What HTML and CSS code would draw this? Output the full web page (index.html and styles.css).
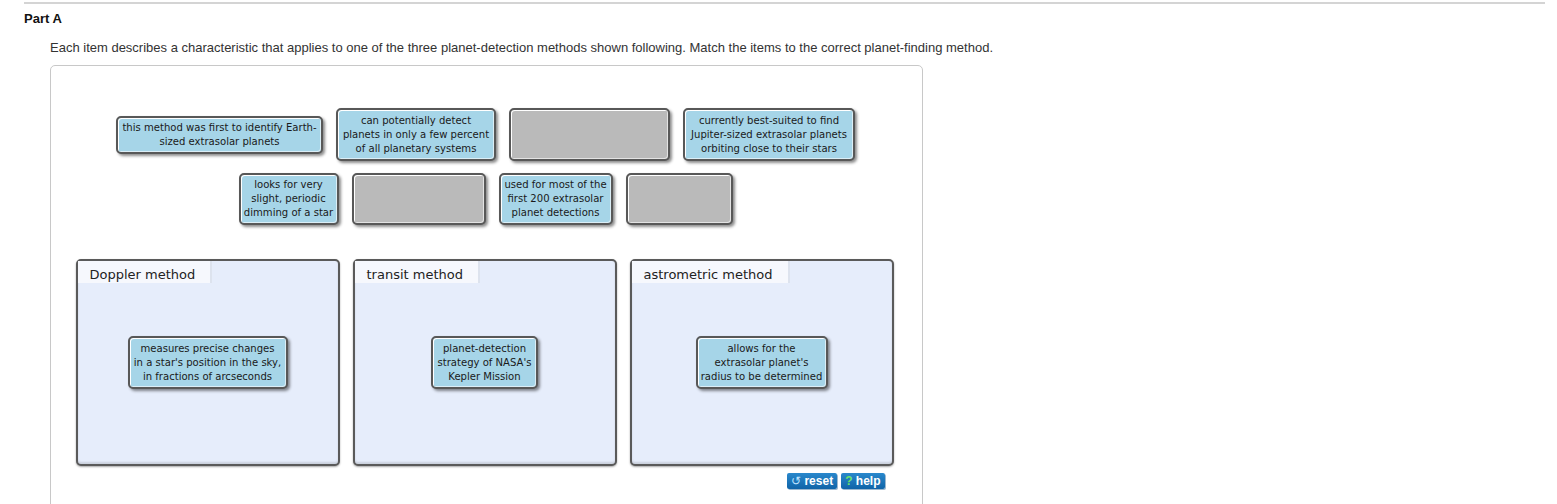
FILE: index.html
```html
<!DOCTYPE html>
<html lang="en">
<head>
    <meta charset="UTF-8">
    <title>Part A</title>
    <link rel="stylesheet" href="styles.css">
</head>
<body>
    <div class="page">
        <h3 class="part-title">Part A</h3>
        <p class="prompt">Each item describes a characteristic that applies to one of the three planet-detection methods shown following. Match the items to the correct planet-finding method.</p>

        <div class="answer-box">
            <!-- items still waiting to be sorted -->
            <div class="item-row">
                <div class="item" style="width: 207px; height: 38px;">this method was first to identify Earth-<br>sized extrasolar planets</div>
                <div class="item" style="width: 160px;">can potentially detect<br>planets in only a few percent<br>of all planetary systems</div>
                <div class="slot" style="width: 161px;"></div>
                <div class="item" style="width: 172px;">currently best-suited to find<br>Jupiter-sized extrasolar planets<br>orbiting close to their stars</div>
            </div>
            <div class="item-row row-two">
                <div class="item" style="width: 100px;">looks for very<br>slight, periodic<br>dimming of a star</div>
                <div class="slot" style="width: 134px;"></div>
                <div class="item" style="width: 114px;">used for most of the<br>first 200 extrasolar<br>planet detections</div>
                <div class="slot" style="width: 107px;"></div>
            </div>

            <!-- target bins -->
            <div class="bins">
                <div class="bin">
                    <div class="bin-label">Doppler method</div>
                    <div class="item" style="width: 160px;">measures precise changes<br>in a star's position in the sky,<br>in fractions of arcseconds</div>
                </div>
                <div class="bin">
                    <div class="bin-label">transit method</div>
                    <div class="item" style="width: 107px;">planet-detection<br>strategy of NASA's<br>Kepler Mission</div>
                </div>
                <div class="bin">
                    <div class="bin-label">astrometric method</div>
                    <div class="item" style="width: 132px;">allows for the<br>extrasolar planet's<br>radius to be determined</div>
                </div>
            </div>

            <div class="tools">
                <span class="tool-btn"><span class="reset-icon">&#8634;</span> reset</span>
                <span class="tool-btn"><span class="help-icon">?</span> help</span>
            </div>
        </div>
    </div>
</body>
</html>
```

FILE: styles.css
```css
body {
    margin: 0;
    font-family: "Liberation Sans", Arial, sans-serif;
    color: #333;
    background-color: #fff;
}

.page {
    margin: 2px 12px 0 24px;
    border-top: 2px solid #d4d4d4;
}

.part-title {
    margin: 0;
    padding-top: 7px;
    font-size: 13px;
    line-height: 15px;
    color: #111;
}

.prompt {
    margin: 14px 0 0 26px;
    font-size: 13px;
    line-height: 15px;
    color: #333;
}

.answer-box {
    margin: 10px 0 0 26px;
    width: 873px;
    height: 460px;
    border: 1px solid #c8c8c8;
    border-radius: 5px;
    display: flex;
    flex-direction: column;
    align-items: center;
    padding: 42px 2px 0 0;
    box-sizing: border-box;
}

.item-row {
    display: flex;
    align-items: center;
    justify-content: center;
    gap: 13px;
}

.row-two {
    margin-top: 12px;
}

.item,
.slot {
    box-sizing: border-box;
    height: 53px;
    border: 2px solid #585858;
    border-radius: 5px;
    box-shadow: inset 1px 1px 0 #fff, inset -1px -1px 0 rgba(255, 255, 255, 0.6), 2px 2px 3px rgba(0, 0, 0, 0.45);
}

.item {
    background-color: #a6d5e8;
    display: flex;
    align-items: center;
    justify-content: center;
    text-align: center;
    font-family: "DejaVu Sans Condensed", "DejaVu Sans", sans-serif;
    font-size: 11.2px;
    line-height: 14px;
    color: #1a1a1a;
    white-space: nowrap;
}

.slot {
    background-color: #bababa;
}

.row-two .item,
.row-two .slot {
    height: 52px;
}

.bins {
    display: flex;
    gap: 13px;
    margin-top: 34px;
    margin-right: 2px;
}

.bin {
    box-sizing: border-box;
    width: 264px;
    height: 207px;
    border: 2px solid #5a5a5a;
    border-radius: 5px;
    background-color: #e6edfb;
    box-shadow: inset 0 -2px 2px rgba(0, 0, 0, 0.12), 0 1px 2px rgba(0, 0, 0, 0.35);
    position: relative;
    display: flex;
    align-items: center;
    justify-content: center;
}

.bin-label {
    position: absolute;
    left: 0;
    top: 0;
    height: 22px;
    padding: 5px 15px 0 12px;
    box-sizing: border-box;
    background-color: #f6f8fd;
    border-right: 2px solid #dde3ee;
    font-family: "DejaVu Sans", sans-serif;
    font-size: 13px;
    line-height: 17px;
    color: #222;
    white-space: nowrap;
}

.tools {
    width: 818px;
    display: flex;
    justify-content: flex-end;
    gap: 4px;
    padding-right: 10px;
    box-sizing: border-box;
    margin-top: 7px;
}

.tool-btn {
    height: 16px;
    padding: 0 4px;
    border-radius: 2px;
    background: linear-gradient(#2a88cc, #0f64a8);
    box-shadow: 1px 1px 0 #9cb8cf;
    color: #fff;
    font-family: "Liberation Sans", Arial, sans-serif;
    font-size: 12px;
    font-weight: bold;
    line-height: 16px;
}

.reset-icon {
    color: #bfe4ff;
    font-weight: normal;
}

.help-icon {
    color: #6be36b;
}
```
